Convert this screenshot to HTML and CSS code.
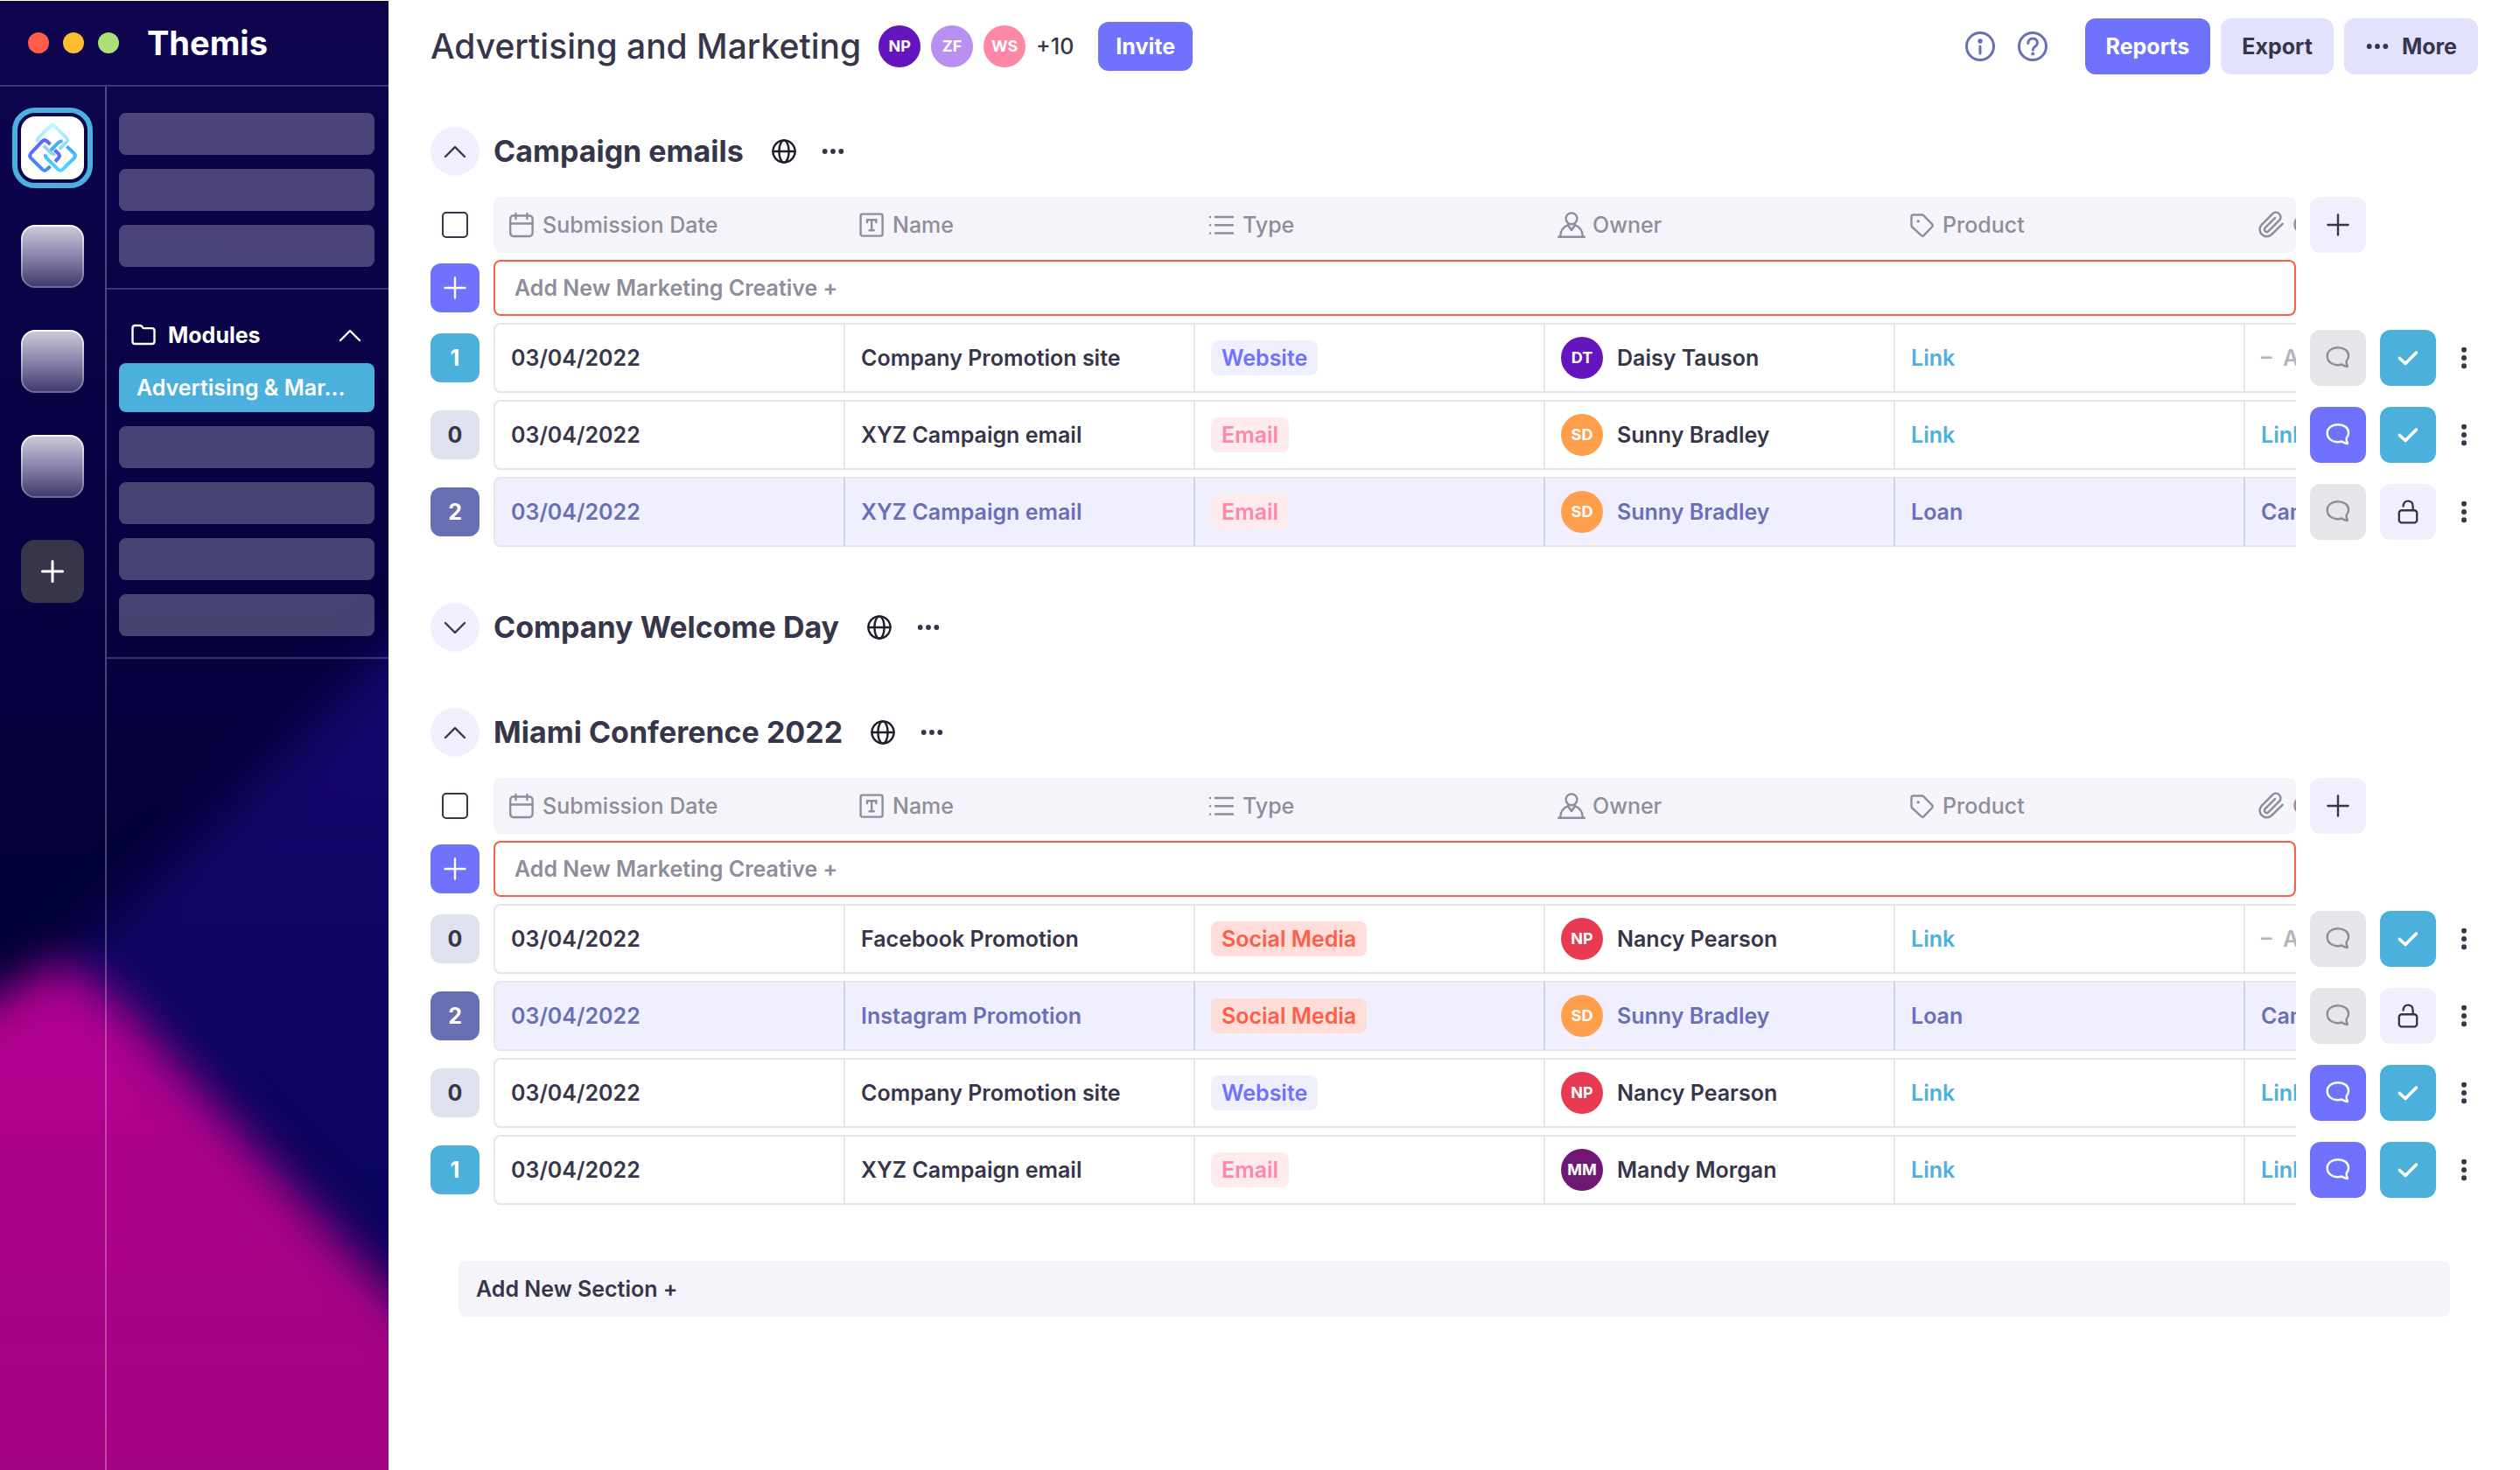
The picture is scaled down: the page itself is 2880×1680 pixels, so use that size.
FILE: index.html
```html
<!DOCTYPE html>
<html lang="en">
<head>
    <meta charset="UTF-8">
    <meta name="viewport" content="width=device-width, initial-scale=1.0">
    <title>Themis - Advertising and Marketing</title>
    <link rel="stylesheet" href="styles.css">
</head>
<body>

    <!-- Shared icons -->
    <svg class="icon-defs" aria-hidden="true">
        <symbol id="chevron-up" viewBox="0 0 28 28"><path d="M3 20 14 9l11 11"/></symbol>
        <symbol id="chevron-down" viewBox="0 0 28 28"><path d="M3 9l11 11L25 9"/></symbol>
        <symbol id="plus" viewBox="0 0 28 28"><path d="M14 2.5v23M2.5 14h23"/></symbol>
        <symbol id="globe" viewBox="0 0 28 28"><circle cx="14" cy="14" r="12.6"/><ellipse cx="14" cy="14" rx="5.6" ry="12.6"/><path d="M1.5 14h25"/></symbol>
        <symbol id="dots" viewBox="0 0 28 28"><g fill="currentColor" stroke="none"><circle cx="4.7" cy="14" r="2.9"/><circle cx="14" cy="14" r="2.9"/><circle cx="23.3" cy="14" r="2.9"/></g></symbol>
        <symbol id="kebab" viewBox="0 0 28 28"><g fill="currentColor" stroke="none"><circle cx="14" cy="4.7" r="3"/><circle cx="14" cy="14" r="3"/><circle cx="14" cy="23.3" r="3"/></g></symbol>
        <symbol id="chat" viewBox="0 0 28 28"><path d="M23.8 17.6c1.4-1.7 2.3-3.8 2.3-6C26.1 6 20.7 2.2 14 2.2S1.7 6 1.7 12 7 22.2 14 22.2c1.6 0 2.5-.2 3.9-.7 2.2 1.1 4.3 2.2 6.900 2.600-.1-1.200-.2-2.100-.9-3.100-.3-1.200-.4-2.400-.1-3.400z"/></symbol>
        <symbol id="check" viewBox="0 0 28 28"><path d="M4.5 14.5 11 20.5 23.5 8" stroke-width="3.6"/></symbol>
        <symbol id="lock" viewBox="0 0 28 28"><rect x="3.8" y="12.2" width="20.4" height="14.2" rx="3"/><path d="M8.6 7.6C8.6 4 10.7 1.6 14 1.6c3.4 0 5.6 2.3 5.6 5.8v4.6"/></symbol>
        <symbol id="calendar" viewBox="0 0 32 32"><rect x="3.2" y="5.5" width="25.4" height="23.5" rx="3.5"/><path d="M3.2 14.5h25.4M9.5 3v6M22.5 3v6"/></symbol>
        <symbol id="text" viewBox="0 0 32 32"><rect x="3.6" y="3.6" width="25" height="25" rx="2"/><path d="M11 13v-2.8h10.4V13M16.2 10.2V22M13.6 22.2h5.2"/></symbol>
        <symbol id="list" viewBox="0 0 32 32"><path d="M9 7h20M9 16.3h20M9 25.5h20M3 7h.1M3 16.3h.1M3 25.5h.1"/></symbol>
        <symbol id="person" viewBox="0 0 32 32"><circle cx="16" cy="8.8" r="6.4"/><path d="M3 29.5c.5-6.5 4-11.5 9-13.3l4 5.8 4-5.8c5 1.8 8.5 6.8 9 13.3M1.2 29.7h29.6"/></symbol>
        <symbol id="tag" viewBox="0 0 32 32"><path d="M4.5 6.5q0-2 2-2h10q1.2 0 2 .8l9.6 9.9q1.4 1.5 0 3l-9.6 9.9q-1.3 1.3-2.6 0L5.3 18.5q-.8-.8-.8-2z"/><path d="M12.2 11.8h.1" stroke-width="3.2"/></symbol>
        <symbol id="clip" viewBox="0 0 24 24"><path stroke-width="1.9" d="M21.4 11.1l-9.2 9.1a6 6 0 0 1-8.5-8.5l9.2-9.2a4 4 0 0 1 5.7 5.7l-9.2 9.2a2 2 0 0 1-2.9-2.9l8.5-8.4"/></symbol>
        <symbol id="info" viewBox="0 0 36 36"><circle cx="18" cy="18" r="15.5"/><path d="M18 18v8"/><circle cx="18" cy="12" r="2.7" fill="currentColor" stroke="none"/></symbol>
        <symbol id="help" viewBox="0 0 36 36"><circle cx="18" cy="18" r="15.5"/><path d="M12.8 14.5c0-3.4 2.2-5.5 5.4-5.5s5.3 2 5.3 5c0 4.2-5.3 4-5.3 8"/><circle cx="18.2" cy="26.5" r="2" fill="currentColor" stroke="none"/></symbol>
        <symbol id="folder" viewBox="0 0 28 28"><path d="M1.5 6q0-3 3-3h5.5q1.5 0 2.3 1.2l.8 1.2q.5.7 1.5.7H23.5q3 0 3 3V21q0 3-3 3h-19q-3 0-3-3z"/></symbol>
    </svg>

    <div class="app">

        <!-- Sidebar -->
        <aside class="sidebar">
            <svg class="sidebar-bg" viewBox="0 0 444 1680" preserveAspectRatio="none" aria-hidden="true">
                <defs>
                    <linearGradient id="bgBase" x1="0" y1="0" x2="0" y2="1">
                        <stop offset="0" stop-color="#0e054e"/>
                        <stop offset=".3" stop-color="#080345"/>
                        <stop offset=".6" stop-color="#030039"/>
                    </linearGradient>
                    <linearGradient id="bgBlue" x1="0" y1="0" x2="0" y2="1">
                        <stop offset="0" stop-color="#180870"/>
                        <stop offset=".5" stop-color="#0e0562"/>
                        <stop offset="1" stop-color="#080258"/>
                    </linearGradient>
                    <linearGradient id="bgPink" x1="0" y1="0" x2="0" y2="1">
                        <stop offset="0" stop-color="#b20092"/>
                        <stop offset="1" stop-color="#9d047e"/>
                    </linearGradient>
                    <filter id="soft" x="-50%" y="-50%" width="200%" height="200%" color-interpolation-filters="sRGB"><feGaussianBlur stdDeviation="26"/></filter>
                </defs>
                <rect width="444" height="1680" fill="url(#bgBase)"/>
                <path d="M560 640 444 742 250 930 40 1130 200 1600H560z" fill="url(#bgBlue)" filter="url(#soft)"/>
                <path d="M-160 1200 0 1138 70 1098 130 1138 300 1322 444 1474 600 1640V1860H-160z" fill="url(#bgPink)" filter="url(#soft)"/>
            </svg>

            <div class="sidebar-header">
                <div class="window-dots">
                    <span class="dot dot-red"></span>
                    <span class="dot dot-yellow"></span>
                    <span class="dot dot-green"></span>
                </div>
                <div class="brand">Themis</div>
            </div>

            <div class="sidebar-body">
                <div class="rail">
                    <a href="#home" class="tile tile-active" aria-label="Home workspace">
                        <svg viewBox="0 0 72 72" fill="none" stroke-width="4" aria-hidden="true">
                            <defs>
                                <linearGradient id="lgTop" x1="0" y1="0" x2="0" y2="1"><stop offset="0" stop-color="#bdf8ff"/><stop offset="1" stop-color="#93d6fc"/></linearGradient>
                                <linearGradient id="lgLeft" x1="0" y1="0" x2="0" y2="1"><stop offset="0" stop-color="#6263f8"/><stop offset="1" stop-color="#4489ff"/></linearGradient>
                                <linearGradient id="lgRight" x1="0" y1="0" x2="0" y2="1"><stop offset="0" stop-color="#3fa6fb"/><stop offset="1" stop-color="#4fd6ff"/></linearGradient>
                            </defs>
                            <path stroke="url(#lgTop)" d="M19 29q-1-2.3 1.2-4.6L33.4 11.2q2.6-2.6 5.2 0l13.2 13.2q2.6 2.6 0 5.2L44 37.4"/>
                            <path stroke="#8fd2fb" d="M25.8 33.3 34 41.5q2.4 2.2 5.2 1.2"/>
                            <path stroke="url(#lgLeft)" d="M33.5 32 29.6 28.3q-2.6-2.3-5.2 0L11.3 42.2q-2.4 2.8 0 5.4l13.1 13q2.6 2.4 5.2 0l3.9-3.6"/>
                            <path stroke="#5a6dfb" d="M38.6 38.3l4.2 4.3q2.2 2.4 0 5L39 51.5"/>
                            <path stroke="#41adfd" d="M34 39l8-8.3q2.4-2.5 5.5-2.5"/>
                            <path stroke="url(#lgRight)" d="M28.3 43.3q-1 2.2.9 4.3l13.2 13q2.6 2.4 5.2 0l13.2-13q2.2-2.6 0-5.2L52.4 34.4"/>
                        </svg>
                    </a>
                    <a href="#workspace-2" class="tile tile-glass" aria-label="Workspace 2"></a>
                    <a href="#workspace-3" class="tile tile-glass" aria-label="Workspace 3"></a>
                    <a href="#workspace-4" class="tile tile-glass" aria-label="Workspace 4"></a>
                    <button class="tile tile-add" aria-label="Add workspace"><svg class="icon"><use href="#plus"/></svg></button>
                </div>

                <nav class="panel">
                    <div class="panel-group">
                        <div class="placeholder"></div>
                        <div class="placeholder"></div>
                        <div class="placeholder"></div>
                    </div>
                    <div class="panel-group panel-modules">
                        <button class="modules-toggle">
                            <svg class="icon"><use href="#folder"/></svg>
                            <span>Modules</span>
                            <svg class="icon"><use href="#chevron-up"/></svg>
                        </button>
                        <a href="#advertising" class="module-link">Advertising &amp; Mar...</a>
                        <div class="placeholder"></div>
                        <div class="placeholder"></div>
                        <div class="placeholder"></div>
                        <div class="placeholder"></div>
                    </div>
                </nav>
            </div>
        </aside>

        <!-- Main Content -->
        <main class="main">
            <header class="topbar">
                <h1>Advertising and Marketing</h1>
                <div class="members">
                    <span class="avatar violet">NP</span>
                    <span class="avatar lilac">ZF</span>
                    <span class="avatar pink">WS</span>
                    <span class="more-members">+10</span>
                </div>
                <button class="btn btn-invite">Invite</button>
                <div class="topbar-right">
                    <button class="icon-btn help-btn" aria-label="Info"><svg class="icon"><use href="#info"/></svg></button>
                    <button class="icon-btn help-btn" aria-label="Help"><svg class="icon"><use href="#help"/></svg></button>
                    <div class="actions">
                        <button class="btn btn-primary">Reports</button>
                        <button class="btn">Export</button>
                        <button class="btn"><svg class="icon"><use href="#dots"/></svg>More</button>
                    </div>
                </div>
            </header>

            <!-- Campaign emails -->
            <section class="section">
                <div class="section-header">
                    <button class="toggle" aria-label="Collapse section"><svg class="icon"><use href="#chevron-up"/></svg></button>
                    <h2>Campaign emails</h2>
                    <button class="icon-btn globe-btn" aria-label="Visibility"><svg class="icon"><use href="#globe"/></svg></button>
                    <button class="icon-btn" aria-label="Section menu"><svg class="icon"><use href="#dots"/></svg></button>
                </div>
                <table class="grid">
                    <colgroup>
                        <col class="col-gutter"><col class="col-data"><col class="col-data"><col class="col-data"><col class="col-data"><col class="col-data"><col><col class="col-tools">
                    </colgroup>
                    <thead>
                        <tr>
                            <td class="gutter"><input type="checkbox" class="select-all" aria-label="Select all campaign emails"></td>
                            <th><div class="th"><svg class="icon"><use href="#calendar"/></svg>Submission Date</div></th>
                            <th><div class="th"><svg class="icon"><use href="#text"/></svg>Name</div></th>
                            <th><div class="th"><svg class="icon"><use href="#list"/></svg>Type</div></th>
                            <th><div class="th"><svg class="icon"><use href="#person"/></svg>Owner</div></th>
                            <th><div class="th"><svg class="icon"><use href="#tag"/></svg>Product</div></th>
                            <th><div class="th"><svg class="icon"><use href="#clip"/></svg>Creative</div></th>
                            <td class="tools"><button class="tool soft" aria-label="Add column"><svg class="icon"><use href="#plus"/></svg></button></td>
                        </tr>
                    </thead>
                    <tbody>
                        <tr class="add-row">
                            <td class="gutter"><button class="count add" aria-label="Add creative"><svg class="icon"><use href="#plus"/></svg></button></td>
                            <td colspan="6"><input type="text" class="add-input" placeholder="Add New Marketing Creative +" aria-label="Add new marketing creative"></td>
                            <td></td>
                        </tr>
                        <tr>
                            <td class="gutter"><span class="count blue">1</span></td>
                            <td class="cell">03/04/2022</td>
                            <td class="cell">Company Promotion site</td>
                            <td class="cell"><span class="tag website">Website</span></td>
                            <td class="cell"><div class="owner"><span class="avatar violet">DT</span>Daisy Tauson</div></td>
                            <td class="cell"><a href="#link">Link</a></td>
                            <td class="cell empty">–&nbsp; Add</td>
                            <td class="tools"><div class="tool-row">
                                <button class="tool grey" aria-label="Comments"><svg class="icon"><use href="#chat"/></svg></button>
                                <button class="tool blue" aria-label="Approved"><svg class="icon"><use href="#check"/></svg></button>
                                <button class="kebab" aria-label="Row menu"><svg class="icon"><use href="#kebab"/></svg></button>
                            </div></td>
                        </tr>
                        <tr>
                            <td class="gutter"><span class="count">0</span></td>
                            <td class="cell">03/04/2022</td>
                            <td class="cell">XYZ Campaign email</td>
                            <td class="cell"><span class="tag email">Email</span></td>
                            <td class="cell"><div class="owner"><span class="avatar orange">SD</span>Sunny Bradley</div></td>
                            <td class="cell"><a href="#link">Link</a></td>
                            <td class="cell"><a href="#link">Link</a></td>
                            <td class="tools"><div class="tool-row">
                                <button class="tool purple" aria-label="Comments"><svg class="icon"><use href="#chat"/></svg></button>
                                <button class="tool blue" aria-label="Approved"><svg class="icon"><use href="#check"/></svg></button>
                                <button class="kebab" aria-label="Row menu"><svg class="icon"><use href="#kebab"/></svg></button>
                            </div></td>
                        </tr>
                        <tr class="locked">
                            <td class="gutter"><span class="count indigo">2</span></td>
                            <td class="cell">03/04/2022</td>
                            <td class="cell">XYZ Campaign email</td>
                            <td class="cell"><span class="tag email">Email</span></td>
                            <td class="cell"><div class="owner"><span class="avatar orange">SD</span>Sunny Bradley</div></td>
                            <td class="cell">Loan</td>
                            <td class="cell">Campaign</td>
                            <td class="tools"><div class="tool-row">
                                <button class="tool grey" aria-label="Comments"><svg class="icon"><use href="#chat"/></svg></button>
                                <button class="tool soft" aria-label="Locked"><svg class="icon"><use href="#lock"/></svg></button>
                                <button class="kebab" aria-label="Row menu"><svg class="icon"><use href="#kebab"/></svg></button>
                            </div></td>
                        </tr>
                    </tbody>
                </table>
            </section>

            <!-- Company Welcome Day (collapsed) -->
            <section class="section">
                <div class="section-header">
                    <button class="toggle" aria-label="Expand section"><svg class="icon"><use href="#chevron-down"/></svg></button>
                    <h2>Company Welcome Day</h2>
                    <button class="icon-btn globe-btn" aria-label="Visibility"><svg class="icon"><use href="#globe"/></svg></button>
                    <button class="icon-btn" aria-label="Section menu"><svg class="icon"><use href="#dots"/></svg></button>
                </div>
            </section>

            <!-- Miami Conference 2022 -->
            <section class="section">
                <div class="section-header">
                    <button class="toggle" aria-label="Collapse section"><svg class="icon"><use href="#chevron-up"/></svg></button>
                    <h2>Miami Conference 2022</h2>
                    <button class="icon-btn globe-btn" aria-label="Visibility"><svg class="icon"><use href="#globe"/></svg></button>
                    <button class="icon-btn" aria-label="Section menu"><svg class="icon"><use href="#dots"/></svg></button>
                </div>
                <table class="grid">
                    <colgroup>
                        <col class="col-gutter"><col class="col-data"><col class="col-data"><col class="col-data"><col class="col-data"><col class="col-data"><col><col class="col-tools">
                    </colgroup>
                    <thead>
                        <tr>
                            <td class="gutter"><input type="checkbox" class="select-all" aria-label="Select all Miami Conference items"></td>
                            <th><div class="th"><svg class="icon"><use href="#calendar"/></svg>Submission Date</div></th>
                            <th><div class="th"><svg class="icon"><use href="#text"/></svg>Name</div></th>
                            <th><div class="th"><svg class="icon"><use href="#list"/></svg>Type</div></th>
                            <th><div class="th"><svg class="icon"><use href="#person"/></svg>Owner</div></th>
                            <th><div class="th"><svg class="icon"><use href="#tag"/></svg>Product</div></th>
                            <th><div class="th"><svg class="icon"><use href="#clip"/></svg>Creative</div></th>
                            <td class="tools"><button class="tool soft" aria-label="Add column"><svg class="icon"><use href="#plus"/></svg></button></td>
                        </tr>
                    </thead>
                    <tbody>
                        <tr class="add-row">
                            <td class="gutter"><button class="count add" aria-label="Add creative"><svg class="icon"><use href="#plus"/></svg></button></td>
                            <td colspan="6"><input type="text" class="add-input" placeholder="Add New Marketing Creative +" aria-label="Add new marketing creative"></td>
                            <td></td>
                        </tr>
                        <tr>
                            <td class="gutter"><span class="count">0</span></td>
                            <td class="cell">03/04/2022</td>
                            <td class="cell">Facebook Promotion</td>
                            <td class="cell"><span class="tag social">Social Media</span></td>
                            <td class="cell"><div class="owner"><span class="avatar red">NP</span>Nancy Pearson</div></td>
                            <td class="cell"><a href="#link">Link</a></td>
                            <td class="cell empty">–&nbsp; Add</td>
                            <td class="tools"><div class="tool-row">
                                <button class="tool grey" aria-label="Comments"><svg class="icon"><use href="#chat"/></svg></button>
                                <button class="tool blue" aria-label="Approved"><svg class="icon"><use href="#check"/></svg></button>
                                <button class="kebab" aria-label="Row menu"><svg class="icon"><use href="#kebab"/></svg></button>
                            </div></td>
                        </tr>
                        <tr class="locked">
                            <td class="gutter"><span class="count indigo">2</span></td>
                            <td class="cell">03/04/2022</td>
                            <td class="cell">Instagram Promotion</td>
                            <td class="cell"><span class="tag social">Social Media</span></td>
                            <td class="cell"><div class="owner"><span class="avatar orange">SD</span>Sunny Bradley</div></td>
                            <td class="cell">Loan</td>
                            <td class="cell">Campaign</td>
                            <td class="tools"><div class="tool-row">
                                <button class="tool grey" aria-label="Comments"><svg class="icon"><use href="#chat"/></svg></button>
                                <button class="tool soft" aria-label="Locked"><svg class="icon"><use href="#lock"/></svg></button>
                                <button class="kebab" aria-label="Row menu"><svg class="icon"><use href="#kebab"/></svg></button>
                            </div></td>
                        </tr>
                        <tr>
                            <td class="gutter"><span class="count">0</span></td>
                            <td class="cell">03/04/2022</td>
                            <td class="cell">Company Promotion site</td>
                            <td class="cell"><span class="tag website">Website</span></td>
                            <td class="cell"><div class="owner"><span class="avatar red">NP</span>Nancy Pearson</div></td>
                            <td class="cell"><a href="#link">Link</a></td>
                            <td class="cell"><a href="#link">Link</a></td>
                            <td class="tools"><div class="tool-row">
                                <button class="tool purple" aria-label="Comments"><svg class="icon"><use href="#chat"/></svg></button>
                                <button class="tool blue" aria-label="Approved"><svg class="icon"><use href="#check"/></svg></button>
                                <button class="kebab" aria-label="Row menu"><svg class="icon"><use href="#kebab"/></svg></button>
                            </div></td>
                        </tr>
                        <tr>
                            <td class="gutter"><span class="count blue">1</span></td>
                            <td class="cell">03/04/2022</td>
                            <td class="cell">XYZ Campaign email</td>
                            <td class="cell"><span class="tag email">Email</span></td>
                            <td class="cell"><div class="owner"><span class="avatar plum">MM</span>Mandy Morgan</div></td>
                            <td class="cell"><a href="#link">Link</a></td>
                            <td class="cell"><a href="#link">Link</a></td>
                            <td class="tools"><div class="tool-row">
                                <button class="tool purple" aria-label="Comments"><svg class="icon"><use href="#chat"/></svg></button>
                                <button class="tool blue" aria-label="Approved"><svg class="icon"><use href="#check"/></svg></button>
                                <button class="kebab" aria-label="Row menu"><svg class="icon"><use href="#kebab"/></svg></button>
                            </div></td>
                        </tr>
                    </tbody>
                </table>
            </section>

            <button class="add-section">Add New Section +</button>
        </main>
    </div>

</body>
</html>
```
FILE: styles.css
```css
/* Reset and Basic Styles */
* {
    margin: 0;
    padding: 0;
    box-sizing: border-box;
}
body {
    font-family: Inter, sans-serif;
    font-size: 25px;
    font-weight: 600;
    line-height: 32px;
    color: #36354a;
    background-color: #fff;
}
button,
input {
    font: inherit;
    color: inherit;
    border: none;
    background: none;
}
button {
    cursor: pointer;
}
a {
    color: #4cb0dd;
    text-decoration: none;
}
.icon-defs {
    display: none;
}
.icon {
    display: block;
    flex: none;
    width: 28px;
    height: 28px;
    fill: none;
    stroke: currentColor;
    stroke-width: 2.4;
    stroke-linecap: round;
    stroke-linejoin: round;
}
.app {
    display: flex;
    min-height: 100vh;
}

/* Sidebar */
.sidebar {
    position: relative;
    display: flex;
    flex-direction: column;
    flex: none;
    width: 444px;
    border-top: 1px solid #fff;
    color: #fff;
}
.sidebar-bg {
    position: absolute;
    inset: 0;
    width: 100%;
    height: 100%;
    z-index: -1;
}
.sidebar-header {
    display: flex;
    align-items: center;
    gap: 32px;
    height: 98px;
    padding-left: 32px;
    border-bottom: 2px solid rgba(255, 255, 255, 0.2);
}
.window-dots {
    display: flex;
    gap: 16px;
}
.dot {
    width: 24px;
    height: 24px;
    border-radius: 50%;
}
.dot-red {
    background-color: #fd5d49;
}
.dot-yellow {
    background-color: #febc31;
}
.dot-green {
    background-color: #abe077;
}
.brand {
    font-size: 38px;
    line-height: 48px;
    font-weight: 700;
}
.sidebar-body {
    display: flex;
    flex: 1;
}

/* Workspace rail */
.rail {
    display: flex;
    flex-direction: column;
    align-items: center;
    gap: 48px;
    width: 120px;
    padding-top: 34px;
}
.tile {
    display: flex;
    align-items: center;
    justify-content: center;
    width: 72px;
    height: 72px;
    border-radius: 16px;
}
.tile-active {
    margin-bottom: 4px;
    background-color: #fff;
    outline: 6px solid #4cb0dd;
    outline-offset: 4px;
}
.tile-glass {
    border: 2px solid transparent;
    background:
        linear-gradient(#cbc9d9, #8f8bb0 45%, #423b70) padding-box,
        linear-gradient(#fff, #6d6993) border-box;
}
.tile-add {
    background-color: #36354a;
}
.tile-add .icon {
    stroke-width: 3;
}

/* Navigation panel */
.panel {
    flex: 1;
    border-left: 2px solid rgba(255, 255, 255, 0.27);
}
.panel-group {
    display: flex;
    flex-direction: column;
    gap: 16px;
    padding: 30px 16px 24px 14px;
    border-bottom: 2px solid rgba(255, 255, 255, 0.2);
}
.panel-modules {
    padding-top: 24px;
}
.placeholder {
    height: 48px;
    border-radius: 8px;
    background-color: rgba(255, 255, 255, 0.26);
}
.modules-toggle {
    display: flex;
    align-items: center;
    gap: 14px;
    height: 56px;
    margin-bottom: -12px;
    padding: 0 14px;
    font-weight: 700;
}
.modules-toggle span {
    flex: 1;
    text-align: left;
}
.module-link {
    padding: 12px 20px;
    border-radius: 8px;
    background-color: #4cb0dd;
    color: #fff;
    white-space: nowrap;
}

/* Top bar */
.main {
    flex: 1;
    min-width: 0;
    padding: 21px 48px 48px;
}
.topbar {
    display: flex;
    align-items: center;
    height: 64px;
}
.topbar h1 {
    font-size: 39px;
    line-height: 48px;
    font-weight: 500;
}
.members {
    display: flex;
    align-items: center;
    gap: 12px;
    margin: 0 28px 0 20px;
    font-weight: 500;
}
.avatar {
    display: flex;
    align-items: center;
    justify-content: center;
    flex: none;
    width: 48px;
    height: 48px;
    border-radius: 50%;
    font-size: 18px;
    font-weight: 700;
    color: #fff;
}
.avatar.violet {
    background-color: #6415be;
}
.avatar.lilac {
    background-color: #b98ff0;
}
.avatar.pink {
    background-color: #fe87a6;
}
.avatar.orange {
    background-color: #ff9f4c;
}
.avatar.red {
    background-color: #e83a52;
}
.avatar.plum {
    background-color: #701775;
}
.btn {
    display: flex;
    align-items: center;
    gap: 14px;
    height: 64px;
    padding: 0 24px;
    border-radius: 12px;
    background-color: #e2e1fe;
    font-weight: 700;
}
.btn-primary,
.btn-invite {
    background-color: #6e72fc;
    color: #fff;
}
.btn-invite {
    height: 56px;
    padding: 0 20px;
}
.topbar-right {
    display: flex;
    align-items: center;
    gap: 24px;
    margin-left: auto;
}
.icon-btn {
    display: flex;
}
.help-btn {
    color: #696fb7;
}
.help-btn .icon {
    width: 36px;
    height: 36px;
    stroke-width: 3;
}
.actions {
    display: flex;
    gap: 12px;
    margin-left: 18px;
}

/* Sections */
.section {
    margin-top: 64px;
}
.topbar + .section {
    margin-top: 60px;
}
.section-header {
    display: flex;
    align-items: center;
    gap: 28px;
}
.section-header h2 {
    margin: 0 4px 0 -12px;
    font-size: 34px;
    line-height: 40px;
    font-weight: 700;
}
.toggle {
    display: flex;
    align-items: center;
    justify-content: center;
    width: 56px;
    height: 56px;
    border-radius: 50%;
    background-color: #f0effe;
}
.globe-btn {
    color: #1f1e2b;
}

/* Data grid */
.grid {
    width: 100%;
    margin: 16px 0 -8px;
    table-layout: fixed;
    border-collapse: separate;
    border-spacing: 0 8px;
}
.col-gutter {
    width: 72px;
}
.col-data {
    width: 400px;
}
.col-tools {
    width: 208px;
}
.grid th {
    overflow: hidden;
    height: 64px;
    padding-left: 16px;
    background-color: #f5f4fa;
    font-weight: 500;
    color: #8e8d9b;
}
.grid th:nth-child(2) {
    border-radius: 8px 0 0 8px;
}
.grid th:nth-child(7) {
    border-radius: 0 8px 8px 0;
}
.th {
    display: flex;
    align-items: center;
    gap: 8px;
    white-space: nowrap;
}
.th .icon {
    width: 32px;
    height: 32px;
}
.select-all {
    display: block;
    appearance: none;
    width: 30px;
    height: 30px;
    margin-left: 13px;
    border: 2px solid #36354a;
    border-radius: 5px;
}
.count {
    display: flex;
    align-items: center;
    justify-content: center;
    width: 56px;
    height: 56px;
    border-radius: 12px;
    background-color: #e0e1ef;
    font-weight: 700;
}
.count.blue,
.tool.blue {
    background-color: #4cb0dd;
    color: #fff;
}
.count.indigo {
    background-color: #696fb3;
    color: #fff;
}
.count.add,
.tool.purple {
    background-color: #6e72fc;
    color: #fff;
}
.add-input {
    display: block;
    width: 100%;
    height: 64px;
    padding: 0 22px;
    border: 2px solid #fd5d49;
    border-radius: 8px;
}
.add-input::placeholder {
    color: #8e8d9b;
    opacity: 1;
}
.cell {
    overflow: hidden;
    height: 80px;
    padding-left: 18px;
    border: 2px solid #e5e5ea;
    border-right: none;
    white-space: nowrap;
}
.cell:nth-child(2) {
    border-radius: 8px 0 0 8px;
}
.cell.empty {
    color: #b4b3bd;
}
.locked .cell {
    background-color: #f0effe;
    color: #696fb7;
}
.locked .cell:nth-child(n+3) {
    border-left-color: #cfd0f0;
}
.tag {
    display: inline-block;
    padding: 4px 12px;
    border-radius: 8px;
}
.tag.website {
    background-color: #f0effe;
    color: #6e72fc;
}
.tag.email {
    background-color: #fdebee;
    color: #fe87a6;
}
.tag.social {
    background-color: #ffded9;
    color: #fd5d49;
}
.owner {
    display: flex;
    align-items: center;
    gap: 16px;
}
.tools {
    padding-left: 16px;
}
.tool-row {
    display: flex;
    align-items: center;
    gap: 16px;
}
.tool {
    display: flex;
    align-items: center;
    justify-content: center;
    width: 64px;
    height: 64px;
    border-radius: 12px;
}
.tool.soft {
    background-color: #f0effe;
}
.tool.grey {
    background-color: #e5e5ea;
    color: #8e8d9b;
}
.kebab {
    display: flex;
    justify-content: center;
    width: 32px;
}

/* Add section bar */
.add-section {
    display: block;
    width: calc(100% - 64px);
    margin: 64px 32px 0;
    padding: 16px 20px;
    border-radius: 8px;
    background-color: #f5f4fa;
    text-align: left;
}
```
